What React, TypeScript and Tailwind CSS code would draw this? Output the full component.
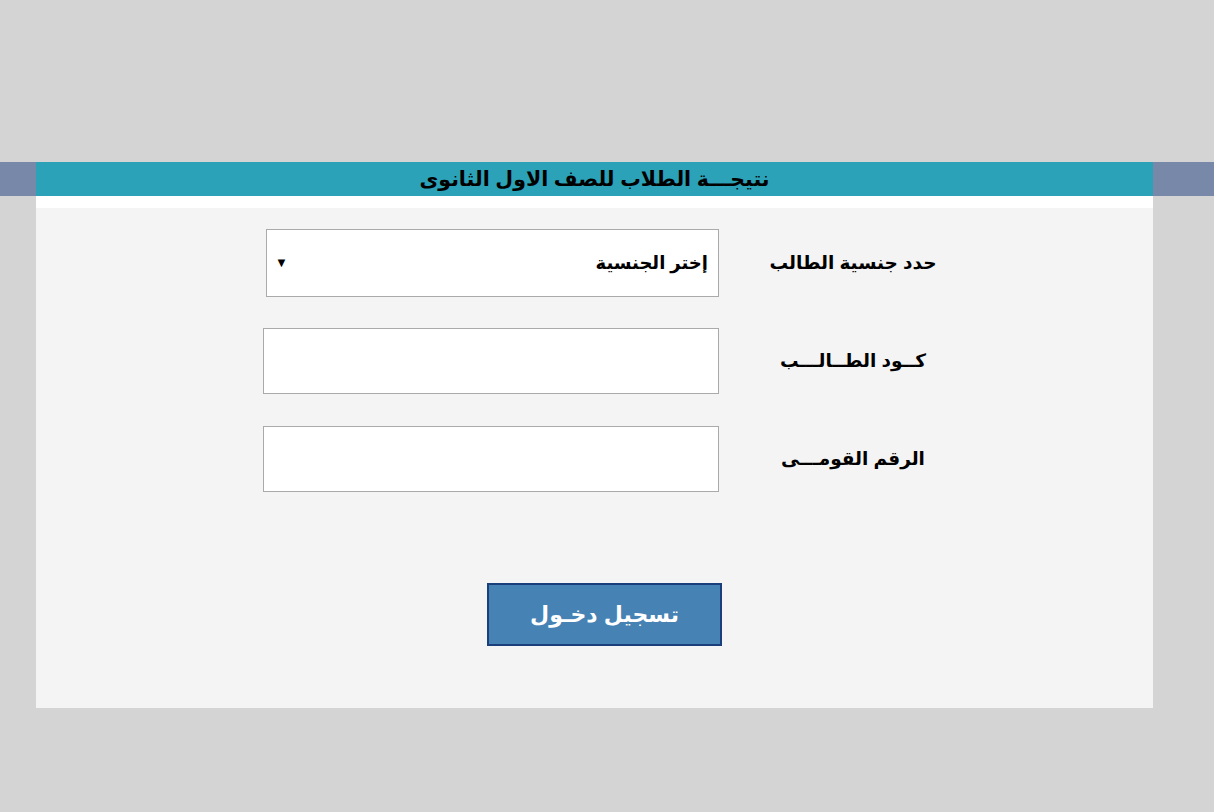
export default function App() {
  const font = { fontFamily: "Arial, 'DejaVu Sans', 'Liberation Sans', sans-serif" };

  return (
    <div className="min-h-screen w-full bg-[#d4d4d4] pt-[162px]" style={font}>
      {/* header band */}
      <div className="h-[34px] w-full bg-[#7788a9]">
        <div
          dir="rtl"
          className="ml-[36px] flex h-full w-[1117px] items-center justify-center bg-[#2ba2b7] text-[20.5px] font-bold text-black"
        >
          نتيجـــة الطلاب للصف الاول الثانوى
        </div>
      </div>

      <div className="ml-[36px] w-[1117px]">
        <div className="h-[12px] bg-white" />
        <div dir="rtl" className="bg-[#f4f4f4] pb-[62px] pr-[200px] pt-[21px]">
          <div className="flex flex-col">
            <div className="flex items-center">
              <label className="w-[200px] text-center text-[18.5px] font-bold text-black">
                حدد جنسية الطالب
              </label>
              <div className="mr-[34px] flex h-[68px] w-[453px] items-center justify-between border border-[#aaaaaa] bg-white pl-[8px] pr-[10px]">
                <span className="text-[18px] font-bold text-black">إختر الجنسية</span>
                <span className="text-[13px] text-black">▼</span>
              </div>
            </div>

            <div className="mt-[31px] flex items-center">
              <label className="w-[200px] text-center text-[18.5px] font-bold text-black">
                كــود الطــالـــب
              </label>
              <input
                type="text"
                className="mr-[34px] h-[66px] w-[456px] border border-[#aaaaaa] bg-white px-2 outline-none"
              />
            </div>

            <div className="mt-[32px] flex items-center">
              <label className="w-[200px] text-center text-[18.5px] font-bold text-black">
                الرقم القومـــى
              </label>
              <input
                type="text"
                className="mr-[34px] h-[66px] w-[456px] border border-[#aaaaaa] bg-white px-2 outline-none"
              />
            </div>
          </div>

          <div className="mt-[91px] flex justify-start">
            <button
              type="button"
              className="mr-[231px] h-[63px] w-[235px] border-2 border-[#1b3f7a] bg-[#4682b4] text-[22px] font-bold text-white"
            >
              تسجيل دخـول
            </button>
          </div>
        </div>
      </div>
    </div>
  );
}
